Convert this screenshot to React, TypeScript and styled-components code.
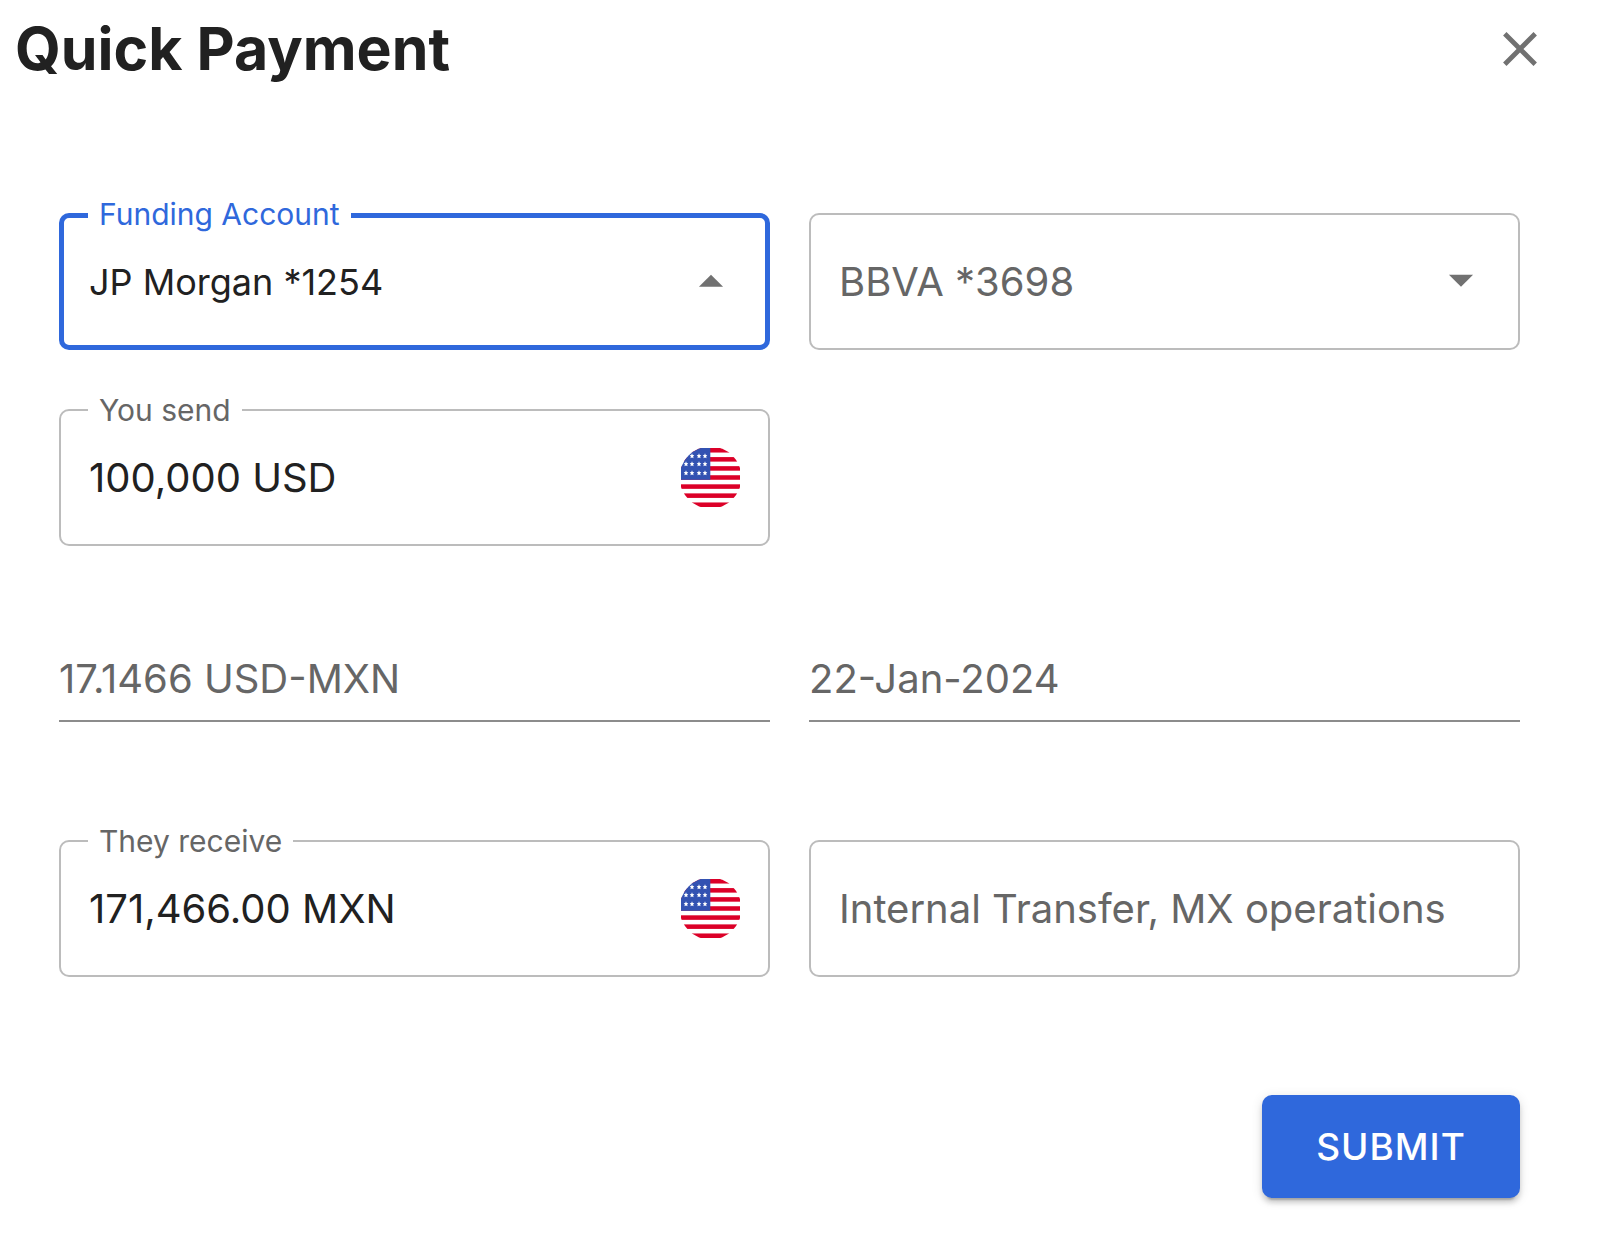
import React, { useId, useState } from 'react';
import styled, { createGlobalStyle, css } from 'styled-components';

const color = {
  text: '#212121',
  muted: '#666666',
  icon: '#717171',
  outline: '#bcbcbc',
  underline: '#8c8c8c',
  primary: '#2f68dc',
  surface: '#ffffff',
};

const GlobalStyle = createGlobalStyle`
  *, *::before, *::after { box-sizing: border-box; }
  body {
    margin: 0;
    background: ${color.surface};
    color: ${color.text};
    font-family: Inter, "Liberation Sans", sans-serif;
  }
`;

const Dialog = styled.main`
  padding-bottom: 36px;
`;

const Header = styled.header`
  display: flex;
  align-items: center;
  justify-content: space-between;
  height: 98px;
  padding: 0 51px 0 15px;
`;

const Title = styled.h1`
  margin: 0;
  font-size: 59px;
  line-height: 72px;
  font-weight: 700;
`;

const CloseButton = styled.button`
  display: flex;
  padding: 0;
  border: 0;
  background: none;
  color: ${color.icon};
  cursor: pointer;
`;

const Form = styled.form`
  display: flex;
  flex-direction: column;
  padding: 115px 80px 0 59px;
`;

const Row = styled.div<{ $gap?: number }>`
  display: grid;
  grid-template-columns: repeat(2, minmax(0, 1fr));
  column-gap: 39px;
  margin-top: ${({ $gap = 0 }) => $gap}px;
`;

const Outline = styled.div<{ $active?: boolean }>`
  position: relative;
  display: flex;
  align-items: center;
  height: 137px;
  padding: 0 30px;
  border-radius: 10px;
  box-shadow: inset 0 0 0
    ${({ $active }) => ($active ? `5px ${color.primary}` : `2px ${color.outline}`)};
`;

const FloatingLabel = styled.label<{ $active?: boolean }>`
  position: absolute;
  top: -17px;
  left: 29px;
  padding: 0 11px;
  background: ${color.surface};
  color: ${({ $active }) => ($active ? color.primary : color.muted)};
  font-size: 30px;
  line-height: 36px;
`;

const controlText = css<{ $muted?: boolean }>`
  flex: 1;
  min-width: 0;
  margin: 0;
  padding: 0;
  border: 0;
  outline: 0;
  background: none;
  color: ${({ $muted }) => ($muted ? color.muted : color.text)};
  font-family: inherit;
  font-size: 40px;
  line-height: 56px;
`;

const TextInput = styled.input<{ $muted?: boolean }>`
  ${controlText}
`;

const Select = styled.select<{ $muted?: boolean; $open?: boolean }>`
  ${controlText}
  appearance: none;
  align-self: stretch;
  margin-right: -58px;
  padding-right: 58px;
  font-size: ${({ $open }) => ($open ? 36 : 40)}px;
  cursor: pointer;
`;

const UnderlinedInput = styled.input<{ $muted?: boolean }>`
  ${controlText}
  width: 100%;
  height: 86px;
  border-bottom: 2px solid ${color.underline};
`;

const Icon = styled.svg`
  flex: none;
  width: 58px;
  height: 58px;
  fill: currentColor;
  color: ${color.icon};
  pointer-events: none;
`;

const FlagSvg = styled.svg`
  flex: none;
  width: 59px;
  height: 59px;
`;

const Actions = styled.div`
  display: flex;
  justify-content: flex-end;
  margin-top: 118px;
`;

const SubmitButton = styled.button`
  min-width: 258px;
  height: 103px;
  padding: 0 54px;
  border: 0;
  border-radius: 10px;
  background: ${color.primary};
  color: #ffffff;
  font-family: inherit;
  font-size: 37px;
  font-weight: 450;
  line-height: 64px;
  letter-spacing: 1px;
  cursor: pointer;
  box-shadow: 0 7px 2px -5px rgba(0, 0, 0, 0.2), 0 5px 5px rgba(0, 0, 0, 0.14),
    0 2px 12px rgba(0, 0, 0, 0.12);
`;

const stripes = [0, 2, 4, 6, 8, 10, 12];
const starRows = [8, 16, 25];
const starColumns = [5, 11, 18, 24];

function UsFlag() {
  const clip = useId();
  return (
    <FlagSvg viewBox="0 0 59 59" role="img" aria-label="United States flag">
      <clipPath id={clip}>
        <circle cx="29.5" cy="29.5" r="31" />
      </clipPath>
      <g clipPath={`url(#${clip})`}>
        <rect width="59" height="59" fill="#ffffff" />
        {stripes.map((n) => (
          <rect key={n} y={(n * 59) / 13} width="59" height={59 / 13} fill="#dc0028" />
        ))}
        <rect width="29.3" height="31.8" fill="#3352b2" />
        {starRows.map((y, row) =>
          starColumns.slice(row === 0 ? 1 : 0).map((x) => (
            <path
              key={`${x}-${y}`}
              transform={`translate(${x} ${y})`}
              d="M0-2.7.7-.9 2.3-.8 1.1.4 1.6 2.3 0 1.4-1.6 2.3-1.1.4-2.3-.8-.7-.9Z"
              fill="#ffffff"
            />
          )),
        )}
      </g>
    </FlagSvg>
  );
}

interface SelectFieldProps {
  name: string;
  label: string;
  value: string;
  open?: boolean;
}

function SelectField({ name, label, value, open = false }: SelectFieldProps) {
  const id = useId();
  return (
    <Outline $active={open}>
      {open && (
        <FloatingLabel htmlFor={id} $active>
          {label}
        </FloatingLabel>
      )}
      <Select
        id={id}
        name={name}
        defaultValue={value}
        aria-label={open ? undefined : label}
        $muted={!open}
        $open={open}
      >
        <option>{value}</option>
      </Select>
      <Icon viewBox="0 0 24 24" aria-hidden="true">
        <path d={open ? 'm7 14 5-5 5 5z' : 'm7 9 5 5 5-5z'} />
      </Icon>
    </Outline>
  );
}

function AmountField({ name, label, initial }: { name: string; label: string; initial: string }) {
  const id = useId();
  const [value, setValue] = useState(initial);
  return (
    <Outline>
      <FloatingLabel htmlFor={id}>{label}</FloatingLabel>
      <TextInput id={id} name={name} value={value} onChange={(e) => setValue(e.target.value)} />
      <UsFlag />
    </Outline>
  );
}

export default function App() {
  return (
    <>
      <GlobalStyle />
      <Dialog>
        <Header>
          <Title>Quick Payment</Title>
          <CloseButton type="button" aria-label="Close">
            <Icon viewBox="0 0 24 24" aria-hidden="true">
              <path d="M19 6.41 17.59 5 12 10.59 6.41 5 5 6.41 10.59 12 5 17.59 6.41 19 12 13.41 17.59 19 19 17.59 13.41 12z" />
            </Icon>
          </CloseButton>
        </Header>
        <Form onSubmit={(e) => e.preventDefault()}>
          <Row>
            <SelectField name="funding" label="Funding Account" value="JP Morgan *1254" open />
            <SelectField name="beneficiary" label="Beneficiary Account" value="BBVA *3698" />
          </Row>
          <Row $gap={59}>
            <AmountField name="send" label="You send" initial="100,000 USD" />
          </Row>
          <Row $gap={90}>
            <UnderlinedInput name="rate" aria-label="Exchange rate" defaultValue="17.1466 USD-MXN" $muted />
            <UnderlinedInput name="date" aria-label="Value date" defaultValue="22-Jan-2024" $muted />
          </Row>
          <Row $gap={118}>
            <AmountField name="receive" label="They receive" initial="171,466.00 MXN" />
            <Outline>
              <TextInput
                name="memo"
                aria-label="Memo"
                defaultValue="Internal Transfer, MX operations"
                $muted
              />
            </Outline>
          </Row>
          <Actions>
            <SubmitButton type="submit">SUBMIT</SubmitButton>
          </Actions>
        </Form>
      </Dialog>
    </>
  );
}
